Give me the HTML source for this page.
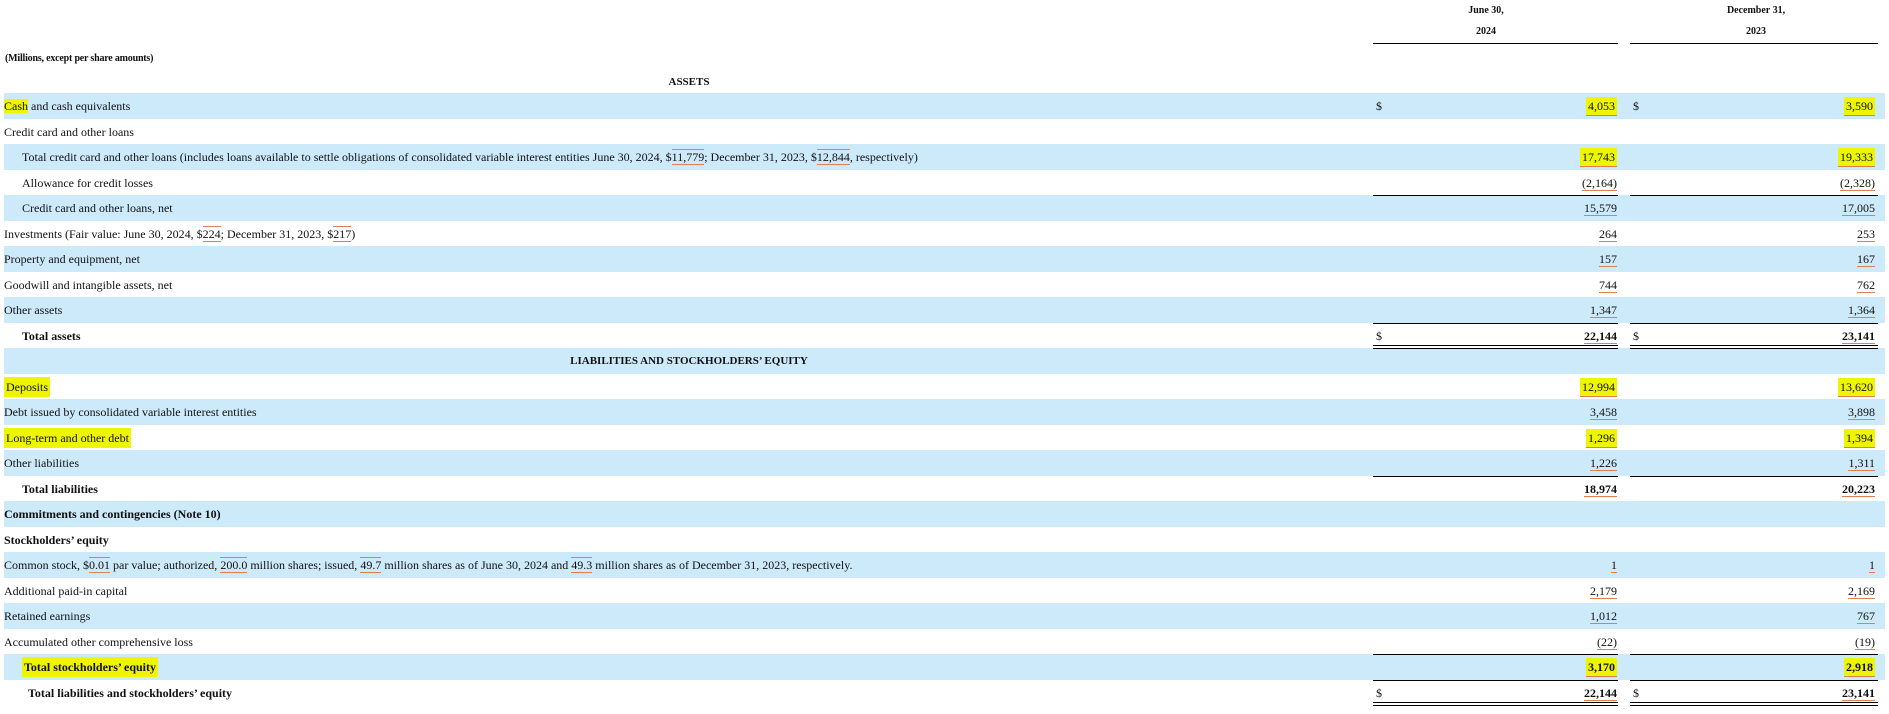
<!DOCTYPE html>
<html><head><meta charset="utf-8"><style>
*{margin:0;padding:0;box-sizing:border-box}
body{width:1889px;height:714px;overflow:hidden;background:#fff;font-family:"Liberation Serif",serif;font-size:12px;color:#111;position:relative}
.r{position:absolute;left:0;width:1889px;height:25.5px}
.b{background:#cdeafb;left:4px;width:1881px}
.t{position:absolute;white-space:nowrap;line-height:14px}
.bold{font-weight:bold}
.hl{background:#eef500}
.n{position:absolute;white-space:nowrap;text-align:right;line-height:14px}
.n span{border-bottom:1px solid #e08050}
.ln{position:absolute;height:0;border-top:1.5px solid #000}
.dl{position:absolute;height:4px;border-top:1.5px solid #000;border-bottom:1.5px solid #000}
u{text-decoration:none;border-top:1px solid #e08050;border-bottom:1px solid #e08050}
.c{position:absolute;white-space:nowrap;line-height:14px;text-align:center;width:600px}
</style></head><body>

<div class="c bold" style="left:1336px;top:4px;font-size:10px;width:300px">June 30,</div>
<div class="c bold" style="left:1336px;top:25px;font-size:10px;width:300px">2024</div>
<div class="c bold" style="left:1606px;top:4px;font-size:10px;width:300px">December 31,</div>
<div class="c bold" style="left:1606px;top:25px;font-size:10px;width:300px">2023</div>
<div class="ln" style="left:1373px;width:245px;top:43px"></div>
<div class="ln" style="left:1630px;width:248px;top:43px"></div>
<div class="t bold" style="left:5px;top:52px;font-size:10px;letter-spacing:-0.2px">(Millions, except per share amounts)</div>
<div class="c bold" style="left:389px;top:75px;font-size:11px">ASSETS</div>

<div id="rows"></div>
<script>
const R=[
["Cash and cash equivalents",0,0,"4,053","3,590",1,"cash"],
["Credit card and other loans",0,0,"","",0],
["Total credit card and other loans (includes loans available to settle obligations of consolidated variable interest entities June 30, 2024, $<u>11,779</u>; December 31, 2023, $<u>12,844</u>, respectively)",18,0,"17,743","19,333",0,"hn"],
["Allowance for credit losses",18,0,"(2,164)","(2,328)",0],
["Credit card and other loans, net",18,0,"15,579","17,005",0],
["Investments (Fair value: June 30, 2024, $<u>224</u>; December 31, 2023, $<u>217</u>)",0,0,"264","253",0],
["Property and equipment, net",0,0,"157","167",0],
["Goodwill and intangible assets, net",0,0,"744","762",0],
["Other assets",0,0,"1,347","1,364",0],
["Total assets",18,1,"22,144","23,141",1],
["",0,0,"","",0],
["Deposits",0,0,"12,994","13,620",0,"all"],
["Debt issued by consolidated variable interest entities",0,0,"3,458","3,898",0],
["Long-term and other debt",0,0,"1,296","1,394",0,"all"],
["Other liabilities",0,0,"1,226","1,311",0],
["Total liabilities",18,1,"18,974","20,223",0],
["Commitments and contingencies (Note 10)",0,1,"","",0],
["Stockholders’ equity",0,1,"","",0],
["Common stock, $<u>0.01</u> par value; authorized, <u>200.0</u> million shares; issued, <u>49.7</u> million shares as of June 30, 2024 and <u>49.3</u> million shares as of December 31, 2023, respectively.",0,0,"1","1",0],
["Additional paid-in capital",0,0,"2,179","2,169",0],
["Retained earnings",0,0,"1,012","767",0],
["Accumulated other comprehensive loss",0,0,"(22)","(19)",0],
["Total stockholders’ equity",18,1,"3,170","2,918",0,"all"],
["Total liabilities and stockholders’ equity",24,1,"22,144","23,141",1]
];
let h="";
R.forEach((r,i)=>{
 const top=93+25.5*i;
 h+=`<div class="r${i%2==0?' b':''}" style="top:${top}px"></div>`;
 let txt=r[0];
 if(r[6]=="cash") txt='<span class="hl">Cash</span> and cash equivalents';
 if(r[6]=="all") txt=`<span class="hl" style="padding:3px 2px">${txt}</span>`;
 h+=`<div class="t${r[2]?' bold':''}" style="left:${4+r[1]}px;top:${top+6}px">${txt}</div>`;
 const hn=r[6]=="all"||r[6]=="hn"||(r[6]=="cash");
 [[r[3],1617],[r[4],1875]].forEach(([v,x])=>{
  if(!v)return;
  h+=`<div class="n${r[2]?' bold':''}" style="right:${1889-x}px;top:${top+6}px"><span${hn?' class="hl"':''}${hn?' style="padding:2px 2px"':''}>${v}</span></div>`;
 });
 if(r[5]){h+=`<div class="t" style="left:1376px;top:${top+6}px">$</div><div class="t" style="left:1633px;top:${top+6}px">$</div>`;}
});
h+=`<div class="c bold" style="left:389px;top:${93+25.5*10+6}px;font-size:11px">LIABILITIES AND STOCKHOLDERS’ EQUITY</div>`;
[4,9,15,22,23].forEach(i=>{
 const y=93+25.5*i;
 h+=`<div class="ln" style="left:1373px;width:245px;top:${y}px"></div><div class="ln" style="left:1630px;width:248px;top:${y}px"></div>`;
});
[10,24].forEach(i=>{
 const y=93+25.5*i-3;
 h+=`<div class="dl" style="left:1373px;width:245px;top:${y}px"></div><div class="dl" style="left:1630px;width:248px;top:${y}px"></div>`;
});
document.getElementById("rows").innerHTML=h;
</script>
</body></html>
